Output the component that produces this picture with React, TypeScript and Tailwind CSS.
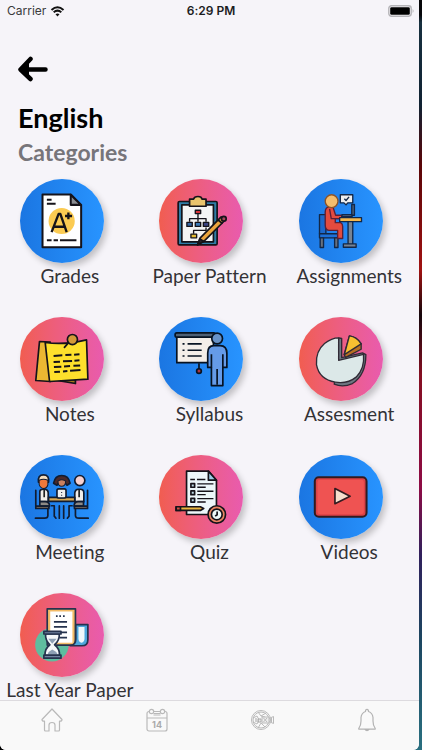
import React from "react";

type Category = {
  name: string;
  tone: "blue" | "pink";
  viewBox: string;
  art: React.ReactNode;
};

const INK = "#15131a";

const GradesArt = (
  <g stroke={INK} strokeWidth="6" strokeLinejoin="round">
    <path d="M99 73H183L214 104V230H99Z" fill="#fff" />
    <path d="M183 74V104H213Z" fill="#8a8d92" />
    <circle cx="156" cy="152" r="39" fill="#fbcb52" stroke="none" />
    <path d="M126 185L147 131H152L171 185M133 169H165" fill="none" strokeWidth="7" />
    <path d="M176 127V147M166 137H187" strokeWidth="7" />
    <path d="M112 89H126M112 101H138M112 209H126M132 209H145M151 209H200" />
  </g>
);

const PatternArt = (
  <g stroke={INK} strokeWidth="5" strokeLinejoin="round">
    <rect x="103" y="94" width="116" height="129" rx="4" fill="#2f7ca6" />
    <path d="M114 104H208V214H114Z" fill="#f4f4f4" />
    <path d="M137 108V87H149Q151 79 162 79T174 87H186V108Z" fill="#e9c46d" />
    <path d="M162 130V154M137 154V145H186V154M186 171V180H149V190" fill="none" strokeWidth="4" />
    <rect x="154" y="120" width="16" height="10" fill="#d83439" strokeWidth="4" />
    <rect x="129" y="156" width="16" height="12" fill="#3568a5" strokeWidth="4" />
    <rect x="154" y="156" width="16" height="12" fill="#3a79b7" strokeWidth="4" />
    <rect x="178" y="156" width="16" height="12" fill="#3b4380" strokeWidth="4" />
    <rect x="141" y="191" width="17" height="11" fill="#e5bd35" strokeWidth="4" />
    <path d="M161 223L168 203L231 140L243 149L181 211Z" fill="#eba53e" />
    <path d="M222 149L235 160" />
    <circle cx="239" cy="145" r="7" fill="#a4485d" />
    <path d="M161 223L168 205L179 213Z" fill="#2b2326" />
  </g>
);

const AssignmentsArt = (
  <g stroke="#122747" strokeWidth="4" strokeLinejoin="round">
    <path d="M107 133H126V190H107Z" fill="#1c68cc" />
    <path d="M107 190H164V202H107Z" fill="#1e70d8" />
    <path d="M109 202H119V231H109ZM152 202H162V231H152Z" fill="#68717e" />
    <path d="M124 126Q124 110 137 110H147L155 135H173V145H154V157H170Q176 160 176 168V204H161V180H137Q124 180 124 164Z" fill="#e34b3e" stroke="#5b1f35" />
    <path d="M137 116L142 145H170" fill="none" stroke="#5b1f35" />
    <circle cx="143" cy="93" r="19" fill="#f4bd6d" stroke="#8c5428" />
    <path d="M169 74H206V98H191L186 104L180 98H169Z" fill="#eee" />
    <path d="M181 86L186 91L195 80" fill="none" />
    <path d="M203 103H211V135H203ZM174 133H204V139H174Z" fill="#536277" />
    <path d="M167 142H232V154H167Z" fill="#f4b84f" />
    <path d="M192 154H206V220H192ZM178 220H216V230H178Z" fill="#778392" />
  </g>
);

const NotesArt = (
  <g stroke={INK} strokeWidth="5" strokeLinejoin="round">
    <path d="M116 210L197 224V213Z" fill="#a3771b" />
    <path d="M90 99L122 101V218L79 215Z" fill="#eab732" />
    <path d="M107 102Q167 110 230 94L234 211L120 218Z" fill="#fee02c" />
    <circle cx="188" cy="93" r="15" fill="#d49a38" />
    <path d="M176 103L163 118" />
    <path d="M132 142L158 140M167 139L185 138M193 138L209 137M132 160L151 159M160 158L187 157M194 156L209 155M133 175L155 174M163 173L181 172M191 171L211 170M134 190L151 189M160 188L173 187M181 186L212 184" strokeWidth="6" />
  </g>
);

const SyllabusArt = (
  <g stroke="#071322" strokeWidth="5" strokeLinejoin="round">
    <path d="M99 82H208V162H99Z" fill="#f3eee9" />
    <rect x="94" y="73" width="120" height="13" rx="5" fill="#4e6074" />
    <path d="M116 106H122M131 106H173M116 125H122M131 125H173M116 142H122M131 142H173M165 164V182" />
    <circle cx="165" cy="187" r="7" fill="#ae353e" />
    <path d="M191 176V133Q191 111 209 111H228Q248 111 248 134V176H236V230H202V176Z" fill="#659be8" />
    <path d="M202 137V176M236 137V176M219 181V228" fill="none" />
    <circle cx="219" cy="90" r="16" fill="#6792c8" />
  </g>
);

const AssesmentArt = (
  <g stroke="#302a35" strokeWidth="4" strokeLinejoin="round">
    <path d="M164 88L173 90V147L235 133L245 138Q245 198 205 224Q177 237 151 226Z" fill="#6e7782" />
    <path d="M164 88V155L238 137Q242 180 216 205Q190 226 154 220Q106 212 98 168Q95 128 122 105Q143 88 164 88Z" fill="#dce8e8" />
    <path d="M196 82Q217 85 231 105V122L185 146L180 138Z" fill="#b86f22" />
    <path d="M196 82Q219 85 231 106L181 138Z" fill="#f8bf31" />
  </g>
);

const MeetingArt = (
  <g stroke="#111c31" strokeWidth="5" strokeLinejoin="round">
    <path d="M87 106Q84 84 102 84Q120 84 117 106Z" fill="#f4ddbd" />
    <path d="M89 100Q102 94 115 100V113Q113 123 102 125Q91 122 89 112Z" fill="#ef783b" strokeWidth="3" />
    <path d="M132 109Q136 86 156 86Q177 86 181 109L172 115L166 108H147L142 115Z" fill="#4b2929" />
    <path d="M145 103Q156 94 168 103Q167 118 156 118T145 103Z" fill="#ca805f" strokeWidth="3" />
    <circle cx="210" cy="101" r="15" fill="#f7d1d0" />
    <path d="M91 134Q91 127 101 127H107Q116 129 116 137V164H91ZM195 137Q197 127 205 127H211Q222 127 222 137V164H195Z" fill="#f3eee9" />
    <path d="M104 129V151M208 129V151" stroke="#222" />
    <path d="M117 151H195V163H117Z" fill="#d9a954" />
    <rect x="142" y="126" width="27" height="27" rx="5" fill="#eee" />
    <path d="M156 135V138M156 143V146" strokeWidth="3" />
    <path d="M91 164H107Q120 164 120 177H91ZM221 164H205Q193 164 193 177H221Z" fill="#8e8984" />
    <path d="M79 130V177H118V184H79ZM233 130V177H194V184H233Z" fill="#bd9d78" />
    <path d="M115 185V205Q115 213 105 213H78M197 185V205Q197 213 208 213H235M126 176H134V207L139 213M149 176V213M162 176V213M187 176H178V207L173 213" fill="none" strokeLinecap="round" />
  </g>
);

const QuizArt = (
  <g stroke={INK} strokeWidth="5" strokeLinejoin="round">
    <path d="M128 73H193L217 100V202H128Z" fill="#edf7fa" />
    <path d="M193 73V100H217Z" fill="#9ecce5" />
    <path d="M139 98H153M159 98H184M160 111H208M160 121H185M160 133H208M160 143H185M160 155H208M160 165H185" strokeWidth="4" />
    <path d="M141 110H152V121H141ZM141 132H152V143H141ZM141 154H152V165H141Z" fill="#bdd9e3" strokeWidth="5" />
    <path d="M97 179H169L179 184L169 190H97Z" fill="#e9b63f" />
    <path d="M97 179H110V190H97Z" fill="#ce5042" />
    <circle cx="218" cy="202" r="26" fill="#e98562" />
    <circle cx="218" cy="202" r="16" fill="#edf7f7" />
    <path d="M219 193V203L213 207" fill="none" />
  </g>
);

const VideosArt = (
  <g stroke="#321b20" strokeWidth="6" strokeLinejoin="round">
    <rect x="93" y="91" width="154" height="118" rx="12" fill="#dc4247" />
    <rect x="101" y="99" width="138" height="102" rx="7" fill="#ef5352" stroke="none" />
    <path d="M153 125L198 148L153 170Z" fill="#f6dfcd" strokeWidth="5" />
  </g>
);

const LastYearArt = (
  <g stroke="#26334e" strokeWidth="5" strokeLinejoin="round">
    <circle cx="157" cy="190" r="50" fill="#5fbd9f" stroke="none" />
    <path d="M143 83H227V191H143Z" fill="#f3bb66" />
    <path d="M152 91H218V184H152Z" fill="#fff" stroke="none" />
    <path d="M169 105H174M179 105H184M190 105H195M163 122H202M163 137H202M174 153H202M179 169H202" />
    <path d="M228 130H264V175Q264 193 246 193H212Q228 190 228 174Z" fill="#4da7dc" />
    <path d="M236 137H254V174Q252 184 244 184Q236 182 236 171Z" fill="#f0f8fa" stroke="none" />
    <path d="M138 158H179Q180 177 165 190Q180 201 180 222H136Q136 201 151 190Q137 177 138 158Z" fill="#f5f8fa" />
    <path d="M146 172H171L158 187ZM144 219Q147 209 158 204Q170 209 174 219Z" fill="#8ea0b5" stroke="none" />
    <path d="M133 150H184V158H133ZM133 221H184V230H133Z" fill="#7183a0" />
  </g>
);

const categories: Category[] = [
  { name: "Grades", tone: "blue", viewBox: "32 27 250 250", art: GradesArt },
  { name: "Paper Pattern", tone: "pink", viewBox: "46 27 250 250", art: PatternArt },
  { name: "Assignments", tone: "blue", viewBox: "46 27 250 250", art: AssignmentsArt },
  { name: "Notes", tone: "pink", viewBox: "32 26 250 250", art: NotesArt },
  { name: "Syllabus", tone: "blue", viewBox: "46 26 250 250", art: SyllabusArt },
  { name: "Assesment", tone: "pink", viewBox: "46 26 250 250", art: AssesmentArt },
  { name: "Meeting", tone: "blue", viewBox: "32 25 250 250", art: MeetingArt },
  { name: "Quiz", tone: "pink", viewBox: "46 25 250 250", art: QuizArt },
  { name: "Videos", tone: "blue", viewBox: "46 25 250 250", art: VideosArt },
  { name: "Last Year Paper", tone: "pink", viewBox: "62 36 250 250", art: LastYearArt },
];

const tones = {
  blue: "bg-linear-to-r from-[#1b76e2] to-[#2894ff]",
  pink: "bg-linear-to-r from-[#f15d50] to-[#e95bae]",
};

function StatusBar() {
  return (
    <div className="grid h-[22px] shrink-0 grid-cols-3 items-center pr-1 pl-[7px] font-['Inter',sans-serif] text-xs text-[#3a3a3c]">
      <div className="flex items-center gap-1">
        <span>Carrier</span>
        <svg className="h-[11px] w-[15px]" viewBox="0 0 14 11" fill="none" stroke="#111" strokeWidth="2">
          <path d="M1 4Q7 -1.5 13 4M3.2 6.3Q7 3 10.8 6.3" />
          <path d="M5 8.2Q7 6.6 9 8.2L7 10.5Z" fill="#111" stroke="none" />
        </svg>
      </div>
      <time className="text-center font-semibold text-[#1c1c1e]">6:29 PM</time>
      <svg className="h-3 w-[27px] justify-self-end" viewBox="0 0 27 12" fill="none">
        <rect x="0.8" y="0.8" width="22.4" height="10.4" rx="2.6" stroke="#b5b4b8" strokeWidth="1.4" />
        <rect x="2.2" y="2.2" width="19.6" height="7.6" rx="1.3" fill="#000" />
        <path d="M24.6 4Q26.6 6 24.6 8Z" fill="#b5b4b8" />
      </svg>
    </div>
  );
}

function CategoryTile({ name, tone, viewBox, art }: Category) {
  return (
    <a href="#category" className="flex flex-col items-center gap-[3px]">
      <span className={`mr-4 block size-[84px] rounded-full shadow-[3px_4px_6px_rgba(0,0,0,0.22)] ${tones[tone]}`}>
        <svg className="size-full" viewBox={viewBox} aria-hidden="true">
          {art}
        </svg>
      </span>
      <span className="text-[19px] leading-5 whitespace-nowrap text-[#333236]">{name}</span>
    </a>
  );
}

function TabBar() {
  return (
    <nav className="sticky bottom-0 grid h-[50px] shrink-0 grid-cols-4 justify-items-center rounded-b-[6px] border-t border-[#dddbdf] bg-[#f9f9f9] pt-[7px]">
      <a href="#home" aria-label="Home" className="h-6">
        <svg className="size-6" viewBox="0 0 24 24" fill="none" stroke="#b9b9b9" strokeWidth="1.2" strokeLinejoin="round">
          <path d="M12 1L22 11.5Q22 13.5 19.5 13V22Q19.5 23 18.5 23H15V17Q15 14.5 12 14.5T9 17V23H5.5Q4.5 23 4.5 22V13Q2 13.5 2 11.5Z" />
        </svg>
      </a>
      <a href="#calendar" aria-label="Calendar" className="h-6">
        <svg className="size-6" viewBox="0 0 24 24" fill="none" stroke="#b9b9b9" strokeWidth="1.2">
          <rect x="2" y="3.5" width="20" height="19.5" rx="2" />
          <path d="M2 10H22M8.5 5.5H15.500M8.5 7H15.5" />
          <circle cx="6.5" cy="3.5" r="2.2" fill="#f9f9f9" />
          <circle cx="17.5" cy="3.5" r="2.2" fill="#f9f9f9" />
          <text x="12" y="19.5" textAnchor="middle" fontFamily="Inter, sans-serif" fontSize="9" fontWeight="700" fill="#aaa" stroke="none">14</text>
        </svg>
      </a>
      <a href="#live" aria-label="Live classes" className="h-6">
        <svg className="size-6" viewBox="0 0 24 24" fill="none" stroke="#bababa" strokeWidth="1">
          <circle cx="11" cy="12" r="9.5" />
          <circle cx="11" cy="12" r="8" />
          <path d="M8 4L11 8L16 5M3 10L7 8L9 12L7 16L3 14M11 8L15 9M8 20L11 15L15 19" />
          <path d="M6 10V14M8 11H11V14H8Z" stroke="#a5a5a5" />
          <path d="M12 9H19V15H12Z" fill="#eee" />
          <path d="M13.5 10L17 14M17 10L13.5 14M19 10.5L23.5 8.500V15.500L19 13.5M21.500 10V14" />
        </svg>
      </a>
      <a href="#notifications" aria-label="Notifications" className="h-6">
        <svg className="size-6" viewBox="0 0 24 24" fill="none" stroke="#b3b3b3" strokeWidth="1.2" strokeLinejoin="round">
          <path d="M4 20Q6 17 6 13V9.5Q6.5 5 10.5 3.5Q10.5 1.3 12 1.3T13.5 3.5Q17.5 5 18 9.5V13Q18 17 20 20Q20.8 21.2 19.5 21.2H4.5Q3.2 21.2 4 20Z" />
          <path d="M10 21.5Q12 24 14 21.5Z" fill="#aaa" />
        </svg>
      </a>
    </nav>
  );
}

export default function App() {
  return (
    <div className="min-h-screen bg-[linear-gradient(to_right,#000_50%,transparent_50%),linear-gradient(to_bottom,#050508_0%,#07080c_2%,#17303f_3%,#102233_14%,#5a0508_22%,#a01212_36%,#15070c_42%,#850f22_50%,#8d0b45_65%,#30205c_74%,#1c4560_85%,#2a7080_100%)] pr-[3px]">
      <div className="flex min-h-screen flex-col rounded-b-[6px] bg-[#f6f4f9] font-['Lato','Liberation_Sans',sans-serif] [font-variant-ligatures:none]">
        <StatusBar />
        <main className="flex-1">
          <header className="px-[18px] pt-[34px]">
            <button type="button" aria-label="Back" className="block h-[26px] w-[30px]">
              <svg className="h-[26px] w-[30px]" viewBox="0 0 30 26" fill="none" stroke="#000" strokeWidth="4.5" strokeLinecap="round" strokeLinejoin="round">
                <path d="M12.5 3L2.5 13.5L12.5 23M4 13.5H27.5" />
                <path d="M11 6L3 13.5L11 20Z" fill="#000" stroke="none" />
              </svg>
            </button>
            <h1 className="mt-5 text-[27px] leading-8 font-bold text-black">English</h1>
            <h2 className="mt-1 text-[23px] leading-7 font-bold text-[#77757a]">Categories</h2>
          </header>
          <div className="mt-[13px] grid grid-cols-3 gap-y-[31px]">
            {categories.map((category) => (
              <CategoryTile key={category.name} {...category} />
            ))}
          </div>
        </main>
        <TabBar />
      </div>
    </div>
  );
}
